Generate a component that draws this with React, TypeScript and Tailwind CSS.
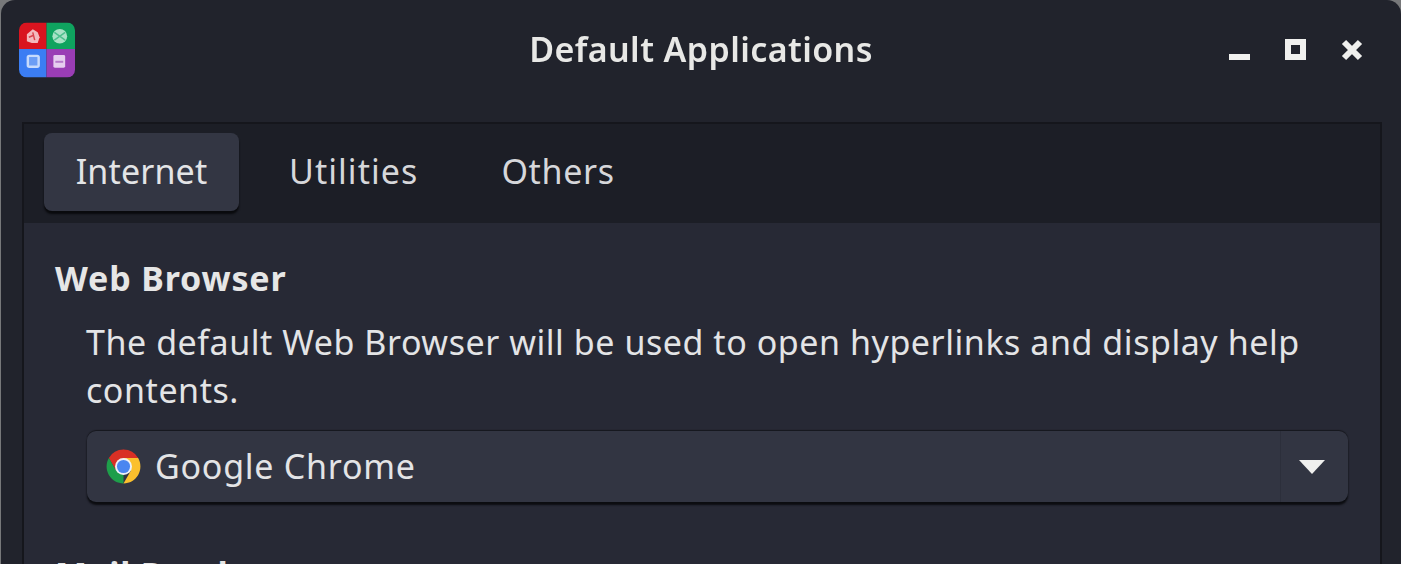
import React from 'react'

const font = { fontFamily: '"Noto Sans", "DejaVu Sans", sans-serif' }

const AppIcon = () => (
  <svg width="56" height="56" viewBox="0 0 57 56">
    <defs>
      <clipPath id="tile">
        <rect x="0" y="0" width="57" height="56" rx="8" />
      </clipPath>
    </defs>
    <g clipPath="url(#tile)">
      <rect x="0" y="0" width="28" height="27" fill="#d9141f" />
      <rect x="28" y="0" width="29" height="27" fill="#0fa35f" />
      <rect x="0" y="27" width="28" height="29" fill="#3b7df3" />
      <rect x="28" y="27" width="29" height="29" fill="#9a3db5" />
    </g>
    <path d="M14 7l5 3 2 5-2 6-6 0-5-2 0-7z" fill="#f3b9bc" />
    <path d="M10 15l5-2M14 10l2 8" stroke="#d9434c" strokeWidth="1.5" />
    <circle cx="41.5" cy="14" r="7.5" fill="#a9e2c6" />
    <path d="M36 10l11 8M36 18l11-8" stroke="#4dbf8d" strokeWidth="1.5" />
    <rect x="9" y="34" width="11" height="11" rx="1.5" fill="#6b9df5" stroke="#c6dafc" strokeWidth="2.5" />
    <rect x="35" y="33" width="12" height="13" rx="1.5" fill="#e6cdef" />
    <rect x="37" y="39" width="8" height="2" fill="#b679cb" />
  </svg>
)

const ChromeIcon = () => (
  <svg width="37" height="37" viewBox="0 0 48 48">
    <path d="M24 24 L24 2 A22 22 0 0 1 43 13 L24 13 Z" fill="#d93025" />
    <path d="M5 13 A22 22 0 0 1 24 2 L43 13 L24 13 L14.5 29.5 Z" fill="#d93025" />
    <path d="M5 13 L14.5 29.5 L24 24 L24 46 A22 22 0 0 1 5 13 Z" fill="#1e9e4a" />
    <path d="M43 13 A22 22 0 0 1 24 46 L33.5 29.5 L24 13 Z" fill="#fbc02d" />
    <circle cx="24" cy="24" r="11" fill="#eef1f6" />
    <circle cx="24" cy="24" r="8.5" fill="#4a86f0" />
  </svg>
)

export default function App() {
  return (
    <div className="h-[564px] w-[1401px] overflow-hidden bg-[#77787a] pl-[1px]">
      <div className="h-[564px] w-[1400px] overflow-hidden bg-[#21232c] rounded-t-[14px] text-[#e3e4e6] blur-[0.5px]" style={font}>
        {/* title bar */}
        <div className="h-[122px] flex items-start relative">
          <div className="absolute left-[18px] top-[22px]">
            <AppIcon />
          </div>
          <div className="w-full text-center pt-[25px] text-[34px] leading-[48px] font-semibold tracking-[0.4px] text-[#e8e8e6]">
            Default Applications
          </div>
          <div className="absolute top-[37px] left-[1228px] flex items-start">
            <div className="w-[21px] h-[23px] flex items-end">
              <div className="w-[21px] h-[6px] bg-[#f0f0ee]" />
            </div>
            <div className="ml-[35px] mt-[2px] w-[21px] h-[21px] border-[6px] border-[#f0f0ee]" />
            <svg width="22" height="22" viewBox="0 0 22 22" className="ml-[35px] mt-[2px]">
              <path d="M3 3L19 19M19 3L3 19" stroke="#f0f0ee" strokeWidth="6" />
            </svg>
          </div>
        </div>

        {/* notebook */}
        <div className="ml-[21px] h-[442px] w-[1360px] border-x-2 border-t-2 border-[#15161c] bg-[#272935]">
          <div className="h-[99px] bg-[#1c1e26] flex items-start pl-[20px] pt-[9px] text-[34px] leading-[77px]">
            <div className="h-[78px] w-[195px] rounded-[8px] bg-[#333643] text-center tracking-[0.15px] shadow-[0_3px_2px_#090a0d]">
              Internet
            </div>
            <div className="ml-[50px] tracking-[1.05px] text-[#d6d7da]">Utilities</div>
            <div className="ml-[83px] tracking-[0.65px] text-[#d6d7da]">Others</div>
          </div>

          <div className="pl-[31px] pr-[32px] pt-[31px]">
            <div className="text-[34px] leading-[48px] font-bold tracking-[0.85px] text-[#e6e6e6]">Web Browser</div>
            <div className="pl-[31px] pt-[16px] text-[34px] leading-[48px] tracking-[0.55px]">
              The default Web Browser will be used to open hyperlinks and display help contents.
            </div>
            <div className="ml-[32px] mt-[17px] h-[71px] flex items-center rounded-[9px] bg-[#323542] shadow-[0_3px_2px_#0b0c10,0_-1px_1px_#16171d] text-[34px]">
              <div className="pl-[18px]">
                <ChromeIcon />
              </div>
              <span className="pl-[13px] flex-1 tracking-[0.75px]">Google Chrome</span>
              <div className="h-full w-[68px] border-l border-[#2c2f3b] flex items-center justify-center pr-[5px]">
                <svg width="26" height="14" viewBox="0 0 26 14">
                  <path d="M0 0H26L13 14Z" fill="#f0f0ee" />
                </svg>
              </div>
            </div>
            <div className="mt-[48px] text-[34px] leading-[48px] font-bold tracking-[0.85px] text-[#e6e6e6]">Mail Reader</div>
          </div>
        </div>
      </div>
    </div>
  )
}
